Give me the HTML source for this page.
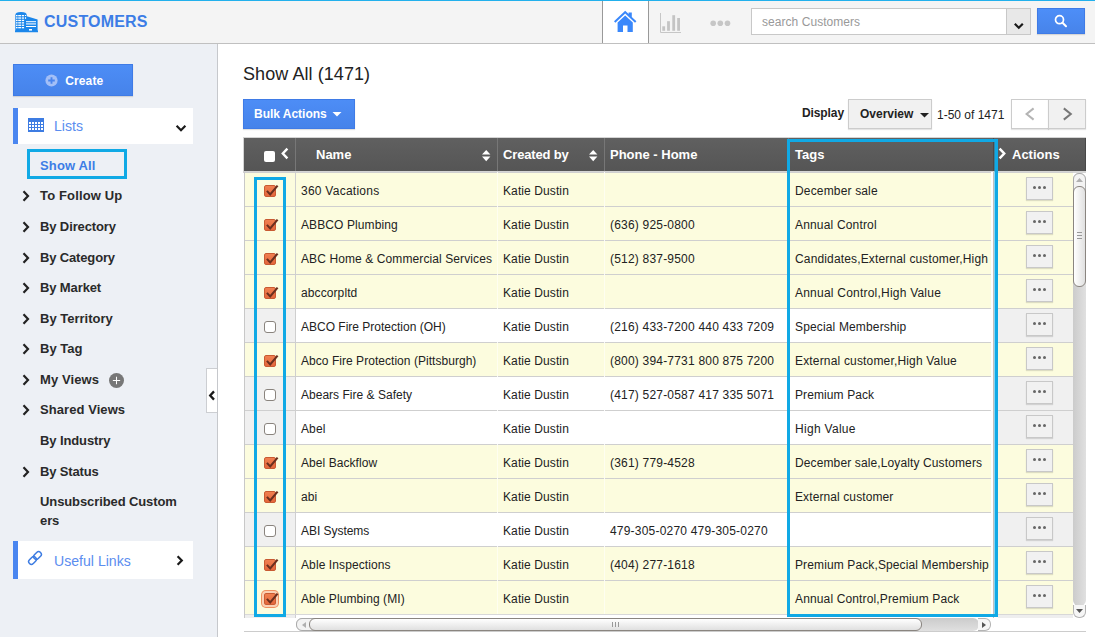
<!DOCTYPE html>
<html><head><meta charset="utf-8"><title>Customers</title>
<style>
*{box-sizing:border-box;margin:0;padding:0}
html,body{width:1095px;height:637px;overflow:hidden;background:#fff;font-family:"Liberation Sans",sans-serif;font-size:12px;color:#222}
u,i,b{text-decoration:none;font-style:normal;font-weight:normal;display:block}
#top{position:absolute;left:0;top:0;width:1095px;height:44px;background:#f4f4f4;border-bottom:1px solid #c0c0c0}
#topline{position:absolute;left:0;top:0;width:1095px;height:1px;background:#22b0ec}
#logo{position:absolute;left:15px;top:12px}
#title{position:absolute;left:44px;top:13px;letter-spacing:.2px;font-size:16px;font-weight:bold;color:#3c7de6;line-height:18px}
#hometab{position:absolute;left:602px;top:1px;width:47px;height:42px;background:#fff;border-left:1px solid #999;border-right:1px solid #999}
#search{position:absolute;left:751px;top:8px;width:256px;height:27px;background:#fff;border:1px solid #c8c8c8;font-size:12px;color:#999;letter-spacing:.05px;padding:6px 0 0 10px;line-height:15px}
#sdrop{position:absolute;left:1006px;top:8px;width:25px;height:27px;background:#e8e8e8;border:1px solid #c8c8c8}
#sbtn{position:absolute;left:1037px;top:8px;width:48px;height:26px;box-shadow:0 1px 1px rgba(0,0,0,.12);background:linear-gradient(#4d8ef8,#4784ea);border:1px solid #3f7be6}
#side{position:absolute;left:0;top:44px;width:218px;height:593px;background:#edf0f5;border-right:1px solid #c6c8cc}
#handle{position:absolute;left:206px;top:368px;width:11px;height:45px;background:#fff;border:1px solid #ccced2;border-right:none}
#create{position:absolute;left:13px;top:64px;width:120px;height:32px;box-shadow:0 1px 1px rgba(0,0,0,.12);background:linear-gradient(#4d8df6,#4683ea);border:1px solid #3f7be6;color:#fff;font-weight:bold;font-size:12px}
.sect{position:absolute;left:13px;width:180px;height:36px;background:#fff;border-left:5px solid #4a86f0;color:#5b8def;font-size:16px}
.sect span{position:absolute;left:36px;top:9px;line-height:18px;font-size:15px;transform-origin:0 50%;white-space:nowrap}
.nav{position:absolute;left:40px;font-weight:bold;font-size:13px;color:#2a2a2a;line-height:19px}
.chev{position:absolute;left:23px}
#showall{position:absolute;left:27px;top:149px;width:100px;height:30px;border:3px solid #10a9e5}
#showall span{position:absolute;left:10px;top:4px;letter-spacing:.15px;font-weight:bold;font-size:13px;color:#3c7de6;line-height:19px}
#h1{position:absolute;left:243px;top:63px;letter-spacing:.07px;font-size:18px;color:#222;line-height:22px}
#bulk{position:absolute;left:243px;top:99px;width:112px;height:30px;background:linear-gradient(#4d8df6,#4683ea);border:1px solid #3f7be6;color:#fff;font-weight:bold;font-size:12px;padding:6px 0 0 10px;line-height:16px;letter-spacing:-.02px;box-shadow:0 1px 1px rgba(0,0,0,.12)}
#theadb{position:absolute;left:243px;top:137px;width:843px;height:36px;background:#d4d4d4}
#thead{position:absolute;left:244px;top:138px;width:842px;height:33px;background:linear-gradient(#606060,#555);color:#fff;font-weight:bold;font-size:13px;border-right:1px solid #484848}
#thead span{position:absolute;top:9px;line-height:16px;white-space:nowrap}
.sort{position:absolute;top:12px;width:9px;height:12px}
#thead i{position:absolute;top:0;width:1px;height:33px;background:#777}
.row{position:absolute;left:244px;width:829px;height:34px;border-top:1px solid #cfcfcf;background:#fff}
.row.sel{background:#fcfcde}
.row span{position:absolute;top:11px;letter-spacing:.1px;white-space:nowrap;color:#222;line-height:15px}
.row i{position:absolute;top:-1px;width:1px;height:34px;background:#cfcfcf}
.row i.w{background:rgba(255,255,255,.55)}
.row i.w:before{content:"";position:absolute;left:0;top:0;width:1px;height:1px;background:rgba(255,255,255,.7)}
.c0{position:absolute;left:0;top:0;width:51px;height:33px;background:#f0f0f0}
.sel .c0{background:#fcfcde}
.ca{position:absolute;left:747px;top:-1px;width:82px;height:34px;background:#f0f0f0;border-top:1px solid #cfcfcf}
.ca:before{content:"";position:absolute;left:0;top:-1px;width:7px;height:34px;background:#fff}
.sel .ca{background:#fcfcde}
.mb{position:absolute;left:35px;top:4px;width:27px;height:23px;background:#f1f1f1;border:1px solid #c8c8c8;box-shadow:0 1px 1px rgba(0,0,0,.12)}
.mb b{position:absolute;top:8px;width:3px;height:3px;border-radius:50%;background:#666}
.cb{position:absolute;left:20px;top:12px;width:12px;height:12px;border:1px solid #8a847e;border-radius:3px;background:#fff}
.ck{position:absolute;left:20px;top:12px;width:12px;height:12px;border:1px solid #c85a32;border-radius:2px;background:linear-gradient(#f08050,#e4673c)}
.ck svg{position:absolute;left:-1px;top:-2px}
.fo{box-shadow:0 0 0 2px #fbd0b4,0 0 0 3px #f09060}
.hl{position:absolute;border:3px solid #10a9e5}
#ovw{position:absolute;left:848px;top:99px;width:84px;height:30px;background:#f1f1f1;border:1px solid #ccc;font-weight:bold;font-size:12px;padding:6px 0 0 11px;line-height:16px;box-shadow:0 1px 1px rgba(0,0,0,.1)}
.pg{position:absolute;top:99px;width:38px;height:30px;border:1px solid #ccc;box-shadow:0 1px 1px rgba(0,0,0,.1)}
</style></head><body>
<div id="top">
 <svg id="logo" width="24" height="21" viewBox="0 0 24 21">
  <path d="M0.3 3.2 Q0.3 0 6 0 Q11.8 0 11.8 3.2 L11.8 4.3 L22.6 7.5 L22.6 18.6 L23 18.6 L23 20.2 L0 20.2 L0 18.6 L0.3 18.6 Z" fill="#1b86ea"/>
  <g fill="#fff">
   <rect x="1" y="3" width="1.6" height="1.3"/><rect x="3.2" y="3" width="3" height="1.3"/><rect x="6.9" y="3" width="2.2" height="1.3"/><rect x="10" y="3" width="1.1" height="1"/>
   <rect x="1" y="5.4" width="1.6" height="1.3"/><rect x="3.2" y="5.4" width="3" height="1.3"/><rect x="6.9" y="5.4" width="2.2" height="1.3"/><rect x="10" y="5.2" width="1.1" height="1.6"/>
   <rect x="1" y="7.8" width="1.6" height="1.3"/><rect x="3.2" y="7.8" width="3" height="1.3"/><rect x="6.9" y="7.8" width="2.2" height="1.3"/>
   <rect x="1" y="10.2" width="1.6" height="1.3"/><rect x="3.2" y="10.2" width="3" height="1.3"/><rect x="6.9" y="10.2" width="2.2" height="1.3"/>
   <rect x="1" y="12.6" width="1.6" height="1.3"/><rect x="3.2" y="12.6" width="3" height="1.3"/><rect x="6.9" y="12.6" width="2.2" height="1.3"/>
   <rect x="1" y="15" width="1.6" height="1.3"/><rect x="3.2" y="15" width="3" height="1.3"/><rect x="6.9" y="15" width="2.2" height="1.3"/>
   <rect x="11" y="9.2" width="10" height="1"/><rect x="11" y="11" width="10" height="1.8" opacity=".6"/><rect x="11" y="14" width="10" height="1"/>
   <rect x="14" y="17" width="3" height="1.6"/>
  </g>
 </svg>
 <div id="title">CUSTOMERS</div>
 <div id="hometab">
  <svg style="position:absolute;left:10px;top:9px" width="25" height="23" viewBox="0 0 25 23">
   <path d="M12.2 0.8 L15.6 4 L15.6 2.6 L18.8 2.6 L18.8 7 L23.4 11.3 L22 12.7 L12.2 3.6 L2.4 12.7 L1 11.3 Z" fill="#3a88fb"/>
   <path d="M12.2 5.6 L19.8 12.6 L19.8 22 L14.5 22 L14.5 15.4 L10 15.4 L10 22 L4.6 22 L4.6 12.6 Z" fill="#3a88fb"/>
  </svg>
 </div>
 <svg style="position:absolute;left:659px;top:12px" width="23" height="22" viewBox="0 0 23 22">
  <path d="M1.5 1 L1.5 20.5 L22 20.5" fill="none" stroke="#c6c6c6" stroke-width="1"/>
  <g fill="#c4c4c4"><rect x="3.3" y="14.3" width="2.8" height="4.5"/><rect x="8.1" y="9.2" width="2.8" height="9.6"/><rect x="13.3" y="3.2" width="2.8" height="15.6"/><rect x="18.2" y="6" width="2.8" height="12.8"/></g>
 </svg>
 <svg style="position:absolute;left:709px;top:18.6px" width="23" height="8" viewBox="0 0 23 8"><g fill="#c6c6c6"><circle cx="4.2" cy="4.2" r="2.8"/><circle cx="11.3" cy="4.2" r="2.8"/><circle cx="18.5" cy="4.2" r="2.8"/></g></svg>
 <div id="search">search Customers</div>
 <div id="sdrop"><svg style="position:absolute;left:6px;top:13px" width="12" height="9" viewBox="0 0 12 9"><path d="M1.8 1.8 L5.8 5.8 L9.8 1.8" fill="none" stroke="#1a1a1a" stroke-width="2.2"/></svg></div>
 <div id="sbtn"><svg style="position:absolute;left:15px;top:4px" width="17" height="17" viewBox="0 0 17 17"><circle cx="6.5" cy="6.7" r="4" fill="none" stroke="#fff" stroke-width="1.7"/><path d="M9.5 9.7 L13 13.2" stroke="#fff" stroke-width="2" stroke-linecap="round"/></svg></div>
</div>
<div id="topline"></div>
<div id="side"></div>
<div id="handle"><svg style="position:absolute;left:1.4px;top:21.2px" width="8" height="11" viewBox="0 0 8 11"><path d="M6 1.4 L2.2 5.5 L6 9.6" fill="none" stroke="#1a1a1a" stroke-width="2.3"/></svg></div>
<div id="create"><svg style="position:absolute;left:30.7px;top:8.7px" width="13" height="13" viewBox="0 0 13 13"><circle cx="6.5" cy="6.5" r="6.1" fill="#a3bff7"/><path d="M6.5 3.2 V9.8 M3.2 6.5 H9.8" stroke="#4a85ee" stroke-width="1.9"/></svg><span style="position:absolute;left:51.3px;top:8px;line-height:16px;letter-spacing:.1px">Create</span></div>
<div class="sect" style="top:108px">
 <svg style="position:absolute;left:10px;top:10px" width="16" height="14" viewBox="0 0 16 14"><rect width="16" height="14" fill="#3d7ce2"/><g fill="#fff">
 <rect x="1" y="4" width="2" height="2"/><rect x="4" y="4" width="2" height="2"/><rect x="7" y="4" width="2" height="2"/><rect x="10" y="4" width="2" height="2"/><rect x="13" y="4" width="2" height="2"/>
 <rect x="1" y="7" width="2" height="2"/><rect x="4" y="7" width="2" height="2"/><rect x="7" y="7" width="2" height="2"/><rect x="10" y="7" width="2" height="2"/><rect x="13" y="7" width="2" height="2"/>
 <rect x="1" y="10" width="2" height="2"/><rect x="4" y="10" width="2" height="2"/><rect x="7" y="10" width="2" height="2"/><rect x="10" y="10" width="2" height="2"/><rect x="13" y="10" width="2" height="2"/></g></svg>
 <span style="transform:scaleX(.94)">Lists</span>
 <svg style="position:absolute;left:157px;top:16px" width="12" height="9" viewBox="0 0 12 9"><path d="M1.6 1.8 L6 6.2 L10.4 1.8" fill="none" stroke="#1a1a1a" stroke-width="2.2"/></svg>
</div>
<div id="showall"><span>Show All</span></div>
<div class="sect" style="top:541px;height:38px">
 <svg style="position:absolute;left:9px;top:9px" width="16" height="16" viewBox="0 0 16 16"><g transform="rotate(-45 8 8)" fill="none" stroke="#3d7ce2" stroke-width="1.5"><rect x="0.2" y="5.3" width="8.6" height="5.4" rx="2.7"/><rect x="7.2" y="5.3" width="8.6" height="5.4" rx="2.7"/></g></svg>
 <span style="top:11px;transform:scaleX(.94)">Useful Links</span>
 <svg style="position:absolute;left:158px;top:14px" width="8" height="11" viewBox="0 0 8 11"><path d="M1.6 1.2 L5.8 5.5 L1.6 9.8" fill="none" stroke="#1a1a1a" stroke-width="2.2"/></svg>
</div>
<div style="position:absolute;left:109px;top:373px;width:15px;height:15px;border-radius:50%;background:#777"><svg style="position:absolute;left:0;top:0" width="15" height="15" viewBox="0 0 14 14"><path d="M7 3.6 V10.4 M3.6 7 H10.4" stroke="#fff" stroke-width="0.95"/></svg></div>

<svg class="chev" style="left:22.4px;top:189.6px" width="8" height="12" viewBox="0 0 8 12"><path d="M1.5 1.2 L6 6 L1.5 10.8" fill="none" stroke="#222" stroke-width="2.2"/></svg>
<div class="nav" style="top:186px;letter-spacing:0.15px">To Follow Up</div>
<svg class="chev" style="left:22.4px;top:220.6px" width="8" height="12" viewBox="0 0 8 12"><path d="M1.5 1.2 L6 6 L1.5 10.8" fill="none" stroke="#222" stroke-width="2.2"/></svg>
<div class="nav" style="top:217px;letter-spacing:-0.12px">By Directory</div>
<svg class="chev" style="left:22.4px;top:251.6px" width="8" height="12" viewBox="0 0 8 12"><path d="M1.5 1.2 L6 6 L1.5 10.8" fill="none" stroke="#222" stroke-width="2.2"/></svg>
<div class="nav" style="top:248px;letter-spacing:-0.15px">By Category</div>
<svg class="chev" style="left:22.4px;top:281.6px" width="8" height="12" viewBox="0 0 8 12"><path d="M1.5 1.2 L6 6 L1.5 10.8" fill="none" stroke="#222" stroke-width="2.2"/></svg>
<div class="nav" style="top:278px;letter-spacing:-0.12px">By Market</div>
<svg class="chev" style="left:22.4px;top:312.6px" width="8" height="12" viewBox="0 0 8 12"><path d="M1.5 1.2 L6 6 L1.5 10.8" fill="none" stroke="#222" stroke-width="2.2"/></svg>
<div class="nav" style="top:309px;letter-spacing:0px">By Territory</div>
<svg class="chev" style="left:22.4px;top:342.6px" width="8" height="12" viewBox="0 0 8 12"><path d="M1.5 1.2 L6 6 L1.5 10.8" fill="none" stroke="#222" stroke-width="2.2"/></svg>
<div class="nav" style="top:339px;letter-spacing:0px">By Tag</div>
<svg class="chev" style="left:22.4px;top:373.6px" width="8" height="12" viewBox="0 0 8 12"><path d="M1.5 1.2 L6 6 L1.5 10.8" fill="none" stroke="#222" stroke-width="2.2"/></svg>
<div class="nav" style="top:370px;letter-spacing:0.1px">My Views</div>
<svg class="chev" style="left:22.4px;top:403.6px" width="8" height="12" viewBox="0 0 8 12"><path d="M1.5 1.2 L6 6 L1.5 10.8" fill="none" stroke="#222" stroke-width="2.2"/></svg>
<div class="nav" style="top:400px;letter-spacing:0.07px">Shared Views</div>
<div class="nav" style="top:431px;letter-spacing:-0.1px">By Industry</div>
<svg class="chev" style="left:22.4px;top:465.6px" width="8" height="12" viewBox="0 0 8 12"><path d="M1.5 1.2 L6 6 L1.5 10.8" fill="none" stroke="#222" stroke-width="2.2"/></svg>
<div class="nav" style="top:462px;letter-spacing:-0.15px">By Status</div>
<div class="nav" style="top:492px;width:150px;letter-spacing:-.1px">Unsubscribed Custom<br>ers</div>
<div id="h1">Show All (1471)</div>
<div id="bulk">Bulk Actions<svg style="position:absolute;left:88px;top:12px" width="10" height="5" viewBox="0 0 10 5"><path d="M0.5 0 L9.5 0 L5 4.6 Z" fill="#fff"/></svg></div>
<div style="position:absolute;left:802px;top:106px;font-weight:bold;font-size:12px;line-height:14px;letter-spacing:-.1px">Display</div>
<div id="ovw">Overview<svg style="position:absolute;left:71px;top:13px" width="9" height="5" viewBox="0 0 9 5"><path d="M0 0 L9 0 L4.5 4.6 Z" fill="#222"/></svg></div>
<div style="position:absolute;left:937px;top:108px;font-size:12px;line-height:14px">1-50 of 1471</div>
<div class="pg" style="left:1011px;background:#fff"><svg width="36" height="28" viewBox="0 0 36 28"><path d="M21.6 8.4 L14.6 14 L21.6 19.6" fill="none" stroke="#b4b4b4" stroke-width="2"/></svg></div>
<div class="pg" style="left:1048px;background:#f1f1f1"><svg width="36" height="28" viewBox="0 0 36 28"><path d="M14.8 8.4 L21.8 14 L14.8 19.6" fill="none" stroke="#777" stroke-width="2"/></svg></div>
<div id="theadb"></div>
<div id="thead">
<u style="position:absolute;left:19.5px;top:12.6px;width:11px;height:11px;background:#fff;border-radius:2px"></u>
<svg style="position:absolute;left:36px;top:9px" width="10" height="13" viewBox="0 0 10 13"><path d="M7.4 1.6 L2.8 6.5 L7.4 11.4" fill="none" stroke="#fff" stroke-width="2.4"/></svg>
<i style="left:51px"></i><span style="left:72px">Name</span>
<svg class="sort" style="left:238px"><path d="M0 4.6 L4.2 0 L8.4 4.6 Z M0 6.6 L8.4 6.6 L4.2 11.2 Z" fill="#fff"/></svg>
<i style="left:253px"></i><span style="left:259px;letter-spacing:-.15px">Created by</span>
<svg class="sort" style="left:345px"><path d="M0 4.6 L4.2 0 L8.4 4.6 Z M0 6.6 L8.4 6.6 L4.2 11.2 Z" fill="#fff"/></svg>
<i style="left:360px"></i><span style="left:366px">Phone - Home</span>
<i style="left:544px"></i><span style="left:551px">Tags</span>
<i style="left:749px;background:#4a4a4a"></i>
<svg style="position:absolute;left:752.5px;top:9px" width="10" height="13" viewBox="0 0 10 13"><path d="M2.6 1.6 L7.2 6.5 L2.6 11.4" fill="none" stroke="#fff" stroke-width="2.5"/></svg>
<span style="left:768px">Actions</span>
</div>

<div class="row sel" style="top:172px"><div class="c0"><u class="ck"><svg width="16" height="14" viewBox="0 0 16 14"><path d="M2.9 6.9 L6.2 10.4 L13.6 1.6" fill="none" stroke="#6b2f1e" stroke-width="2.1"/></svg></u></div><i style="left:51px"></i><span style="left:57px;letter-spacing:0.25px">360 Vacations</span><i class="w" style="left:253px"></i><span style="left:259px">Katie Dustin</span><i class="w" style="left:360px"></i><span style="left:366px;letter-spacing:.2px"></span><i class="w" style="left:544px"></i><span style="left:551px;letter-spacing:0.16px">December sale</span><div class="ca"><div class="mb"><b style="left:6px"></b><b style="left:11px"></b><b style="left:16px"></b></div></div></div>
<div class="row sel" style="top:206px"><div class="c0"><u class="ck"><svg width="16" height="14" viewBox="0 0 16 14"><path d="M2.9 6.9 L6.2 10.4 L13.6 1.6" fill="none" stroke="#6b2f1e" stroke-width="2.1"/></svg></u></div><i style="left:51px"></i><span style="left:57px;letter-spacing:0.1px">ABBCO Plumbing</span><i class="w" style="left:253px"></i><span style="left:259px">Katie Dustin</span><i class="w" style="left:360px"></i><span style="left:366px;letter-spacing:.2px">(636) 925-0800</span><i class="w" style="left:544px"></i><span style="left:551px;letter-spacing:0.17px">Annual Control</span><div class="ca"><div class="mb"><b style="left:6px"></b><b style="left:11px"></b><b style="left:16px"></b></div></div></div>
<div class="row sel" style="top:240px"><div class="c0"><u class="ck"><svg width="16" height="14" viewBox="0 0 16 14"><path d="M2.9 6.9 L6.2 10.4 L13.6 1.6" fill="none" stroke="#6b2f1e" stroke-width="2.1"/></svg></u></div><i style="left:51px"></i><span style="left:57px;letter-spacing:0.1px">ABC Home &amp; Commercial Services</span><i class="w" style="left:253px"></i><span style="left:259px">Katie Dustin</span><i class="w" style="left:360px"></i><span style="left:366px;letter-spacing:.2px">(512) 837-9500</span><i class="w" style="left:544px"></i><span style="left:551px;letter-spacing:0.15px">Candidates,External customer,High</span><div class="ca"><div class="mb"><b style="left:6px"></b><b style="left:11px"></b><b style="left:16px"></b></div></div></div>
<div class="row sel" style="top:274px"><div class="c0"><u class="ck"><svg width="16" height="14" viewBox="0 0 16 14"><path d="M2.9 6.9 L6.2 10.4 L13.6 1.6" fill="none" stroke="#6b2f1e" stroke-width="2.1"/></svg></u></div><i style="left:51px"></i><span style="left:57px;letter-spacing:0.1px">abccorpltd</span><i class="w" style="left:253px"></i><span style="left:259px">Katie Dustin</span><i class="w" style="left:360px"></i><span style="left:366px;letter-spacing:.2px"></span><i class="w" style="left:544px"></i><span style="left:551px;letter-spacing:0.22px">Annual Control,High Value</span><div class="ca"><div class="mb"><b style="left:6px"></b><b style="left:11px"></b><b style="left:16px"></b></div></div></div>
<div class="row" style="top:308px"><div class="c0"><u class="cb"></u></div><i style="left:51px"></i><span style="left:57px;letter-spacing:0px">ABCO Fire Protection (OH)</span><i class="w" style="left:253px"></i><span style="left:259px">Katie Dustin</span><i class="w" style="left:360px"></i><span style="left:366px;letter-spacing:.2px">(216) 433-7200 440 433 7209</span><i class="w" style="left:544px"></i><span style="left:551px;letter-spacing:0.15px">Special Membership</span><div class="ca"><div class="mb"><b style="left:6px"></b><b style="left:11px"></b><b style="left:16px"></b></div></div></div>
<div class="row sel" style="top:342px"><div class="c0"><u class="ck"><svg width="16" height="14" viewBox="0 0 16 14"><path d="M2.9 6.9 L6.2 10.4 L13.6 1.6" fill="none" stroke="#6b2f1e" stroke-width="2.1"/></svg></u></div><i style="left:51px"></i><span style="left:57px;letter-spacing:0.04px">Abco Fire Protection (Pittsburgh)</span><i class="w" style="left:253px"></i><span style="left:259px">Katie Dustin</span><i class="w" style="left:360px"></i><span style="left:366px;letter-spacing:.2px">(800) 394-7731 800 875 7200</span><i class="w" style="left:544px"></i><span style="left:551px;letter-spacing:0.17px">External customer,High Value</span><div class="ca"><div class="mb"><b style="left:6px"></b><b style="left:11px"></b><b style="left:16px"></b></div></div></div>
<div class="row" style="top:376px"><div class="c0"><u class="cb"></u></div><i style="left:51px"></i><span style="left:57px;letter-spacing:0.02px">Abears Fire &amp; Safety</span><i class="w" style="left:253px"></i><span style="left:259px">Katie Dustin</span><i class="w" style="left:360px"></i><span style="left:366px;letter-spacing:.2px">(417) 527-0587 417 335 5071</span><i class="w" style="left:544px"></i><span style="left:551px;letter-spacing:0.1px">Premium Pack</span><div class="ca"><div class="mb"><b style="left:6px"></b><b style="left:11px"></b><b style="left:16px"></b></div></div></div>
<div class="row" style="top:410px"><div class="c0"><u class="cb"></u></div><i style="left:51px"></i><span style="left:57px;letter-spacing:0.1px">Abel</span><i class="w" style="left:253px"></i><span style="left:259px">Katie Dustin</span><i class="w" style="left:360px"></i><span style="left:366px;letter-spacing:.2px"></span><i class="w" style="left:544px"></i><span style="left:551px;letter-spacing:0.3px">High Value</span><div class="ca"><div class="mb"><b style="left:6px"></b><b style="left:11px"></b><b style="left:16px"></b></div></div></div>
<div class="row sel" style="top:444px"><div class="c0"><u class="ck"><svg width="16" height="14" viewBox="0 0 16 14"><path d="M2.9 6.9 L6.2 10.4 L13.6 1.6" fill="none" stroke="#6b2f1e" stroke-width="2.1"/></svg></u></div><i style="left:51px"></i><span style="left:57px;letter-spacing:0.06px">Abel Backflow</span><i class="w" style="left:253px"></i><span style="left:259px">Katie Dustin</span><i class="w" style="left:360px"></i><span style="left:366px;letter-spacing:.2px">(361) 779-4528</span><i class="w" style="left:544px"></i><span style="left:551px;letter-spacing:0.12px">December sale,Loyalty Customers</span><div class="ca"><div class="mb"><b style="left:6px"></b><b style="left:11px"></b><b style="left:16px"></b></div></div></div>
<div class="row sel" style="top:478px"><div class="c0"><u class="ck"><svg width="16" height="14" viewBox="0 0 16 14"><path d="M2.9 6.9 L6.2 10.4 L13.6 1.6" fill="none" stroke="#6b2f1e" stroke-width="2.1"/></svg></u></div><i style="left:51px"></i><span style="left:57px;letter-spacing:0.1px">abi</span><i class="w" style="left:253px"></i><span style="left:259px">Katie Dustin</span><i class="w" style="left:360px"></i><span style="left:366px;letter-spacing:.2px"></span><i class="w" style="left:544px"></i><span style="left:551px;letter-spacing:0.1px">External customer</span><div class="ca"><div class="mb"><b style="left:6px"></b><b style="left:11px"></b><b style="left:16px"></b></div></div></div>
<div class="row" style="top:512px"><div class="c0"><u class="cb"></u></div><i style="left:51px"></i><span style="left:57px;letter-spacing:-0.04px">ABI Systems</span><i class="w" style="left:253px"></i><span style="left:259px">Katie Dustin</span><i class="w" style="left:360px"></i><span style="left:366px;letter-spacing:.2px">479-305-0270 479-305-0270</span><i class="w" style="left:544px"></i><span style="left:551px;letter-spacing:0.1px"></span><div class="ca"><div class="mb"><b style="left:6px"></b><b style="left:11px"></b><b style="left:16px"></b></div></div></div>
<div class="row sel" style="top:546px"><div class="c0"><u class="ck"><svg width="16" height="14" viewBox="0 0 16 14"><path d="M2.9 6.9 L6.2 10.4 L13.6 1.6" fill="none" stroke="#6b2f1e" stroke-width="2.1"/></svg></u></div><i style="left:51px"></i><span style="left:57px;letter-spacing:0.1px">Able Inspections</span><i class="w" style="left:253px"></i><span style="left:259px">Katie Dustin</span><i class="w" style="left:360px"></i><span style="left:366px;letter-spacing:.2px">(404) 277-1618</span><i class="w" style="left:544px"></i><span style="left:551px;letter-spacing:0.12px">Premium Pack,Special Membership</span><div class="ca"><div class="mb"><b style="left:6px"></b><b style="left:11px"></b><b style="left:16px"></b></div></div></div>
<div class="row sel" style="top:580px"><div class="c0"><u class="ck fo"><svg width="16" height="14" viewBox="0 0 16 14"><path d="M2.9 6.9 L6.2 10.4 L13.6 1.6" fill="none" stroke="#6b2f1e" stroke-width="2.1"/></svg></u></div><i style="left:51px"></i><span style="left:57px;letter-spacing:0.1px">Able Plumbing (MI)</span><i class="w" style="left:253px"></i><span style="left:259px">Katie Dustin</span><i class="w" style="left:360px"></i><span style="left:366px;letter-spacing:.2px"></span><i class="w" style="left:544px"></i><span style="left:551px;letter-spacing:0.14px">Annual Control,Premium Pack</span><div class="ca"><div class="mb"><b style="left:6px"></b><b style="left:11px"></b><b style="left:16px"></b></div></div></div>
<div style="position:absolute;left:244px;top:614px;width:829px;height:1px;background:#d8d8d8"></div>
<div style="position:absolute;left:244px;top:615px;width:51px;height:3px;background:#eee"></div>
<div style="position:absolute;left:295px;top:615px;width:1px;height:3px;background:#cfcfcf"></div>
<div style="position:absolute;left:998px;top:615px;width:75px;height:3px;background:#eee"></div>
<div style="position:absolute;left:244px;top:172px;width:1px;height:446px;background:#c8c8c8"></div>
<div style="position:absolute;left:993px;top:172px;width:1px;height:446px;background:#c0c0c0"></div>
<div style="position:absolute;left:994px;top:139px;width:1px;height:478px;background:rgba(16,169,229,.5)"></div>
<div style="position:absolute;left:244px;top:631px;width:842px;height:1px;background:#ccc"></div>
<!-- vertical scrollbar -->
<div style="position:absolute;left:1073px;top:173px;width:13px;height:433px;background:linear-gradient(90deg,#cbcbcb,#e0e0e0);border-radius:6px"></div>
<div style="position:absolute;left:1073px;top:173px;width:13px;height:20px;background:#f3f3f3;border:1px solid #aaa;border-radius:6px 6px 0 0"><svg style="position:absolute;left:2px;top:4px" width="7" height="4" viewBox="0 0 7 4"><path d="M0 4 L3.5 0 L7 4 Z" fill="#b0b0b0"/></svg></div>
<div style="position:absolute;left:1073px;top:186px;width:13px;height:101px;background:linear-gradient(90deg,#fff,#e0e0e0);border:1px solid #8a8580;border-radius:6px"><u style="position:absolute;left:3px;top:45px;width:5px;height:1px;background:#999;box-shadow:0 3px 0 #999,0 6px 0 #999"></u></div>
<div style="position:absolute;left:1073px;top:598px;width:13px;height:20px;background:#f6f6f6;border:1px solid #b4b4b4;border-top:none;border-radius:0 0 6px 6px;clip-path:inset(7px 0 0 0)"><svg style="position:absolute;left:2px;top:11px" width="7" height="4" viewBox="0 0 7 4"><path d="M0 0 L7 0 L3.5 4 Z" fill="#555"/></svg></div>
<!-- horizontal scrollbar -->
<div style="position:absolute;left:296px;top:618px;width:683px;height:13px;background:linear-gradient(#cbcbcb,#e0e0e0);border-radius:6px"></div>
<div style="position:absolute;left:296px;top:618px;width:20px;height:13px;background:#f3f3f3;border:1px solid #aaa;border-radius:6px 0 0 6px"><svg style="position:absolute;left:5px;top:3px" width="4" height="6" viewBox="0 0 4 6"><path d="M4 0 L4 6 L0 3 Z" fill="#b0b0b0"/></svg></div>
<div style="position:absolute;left:309px;top:618px;width:613px;height:13px;background:linear-gradient(#fff,#e0e0e0);border:1px solid #8a8580;border-radius:6px"><u style="position:absolute;left:302px;top:3px;width:1px;height:5px;background:#999;box-shadow:3px 0 0 #999,6px 0 0 #999"></u></div>
<div style="position:absolute;left:971px;top:618px;width:20px;height:13px;background:#f6f6f6;border:1px solid #b4b4b4;border-left:none;border-radius:0 6px 6px 0;clip-path:inset(0 0 0 7px)"><svg style="position:absolute;left:11px;top:3px" width="4" height="6" viewBox="0 0 4 6"><path d="M0 0 L0 6 L4 3 Z" fill="#555"/></svg></div>
<div class="hl" style="left:254px;top:177px;width:32px;height:440px"></div>
<div class="hl" style="left:787px;top:139px;width:211px;height:478px"></div>

</body></html>
